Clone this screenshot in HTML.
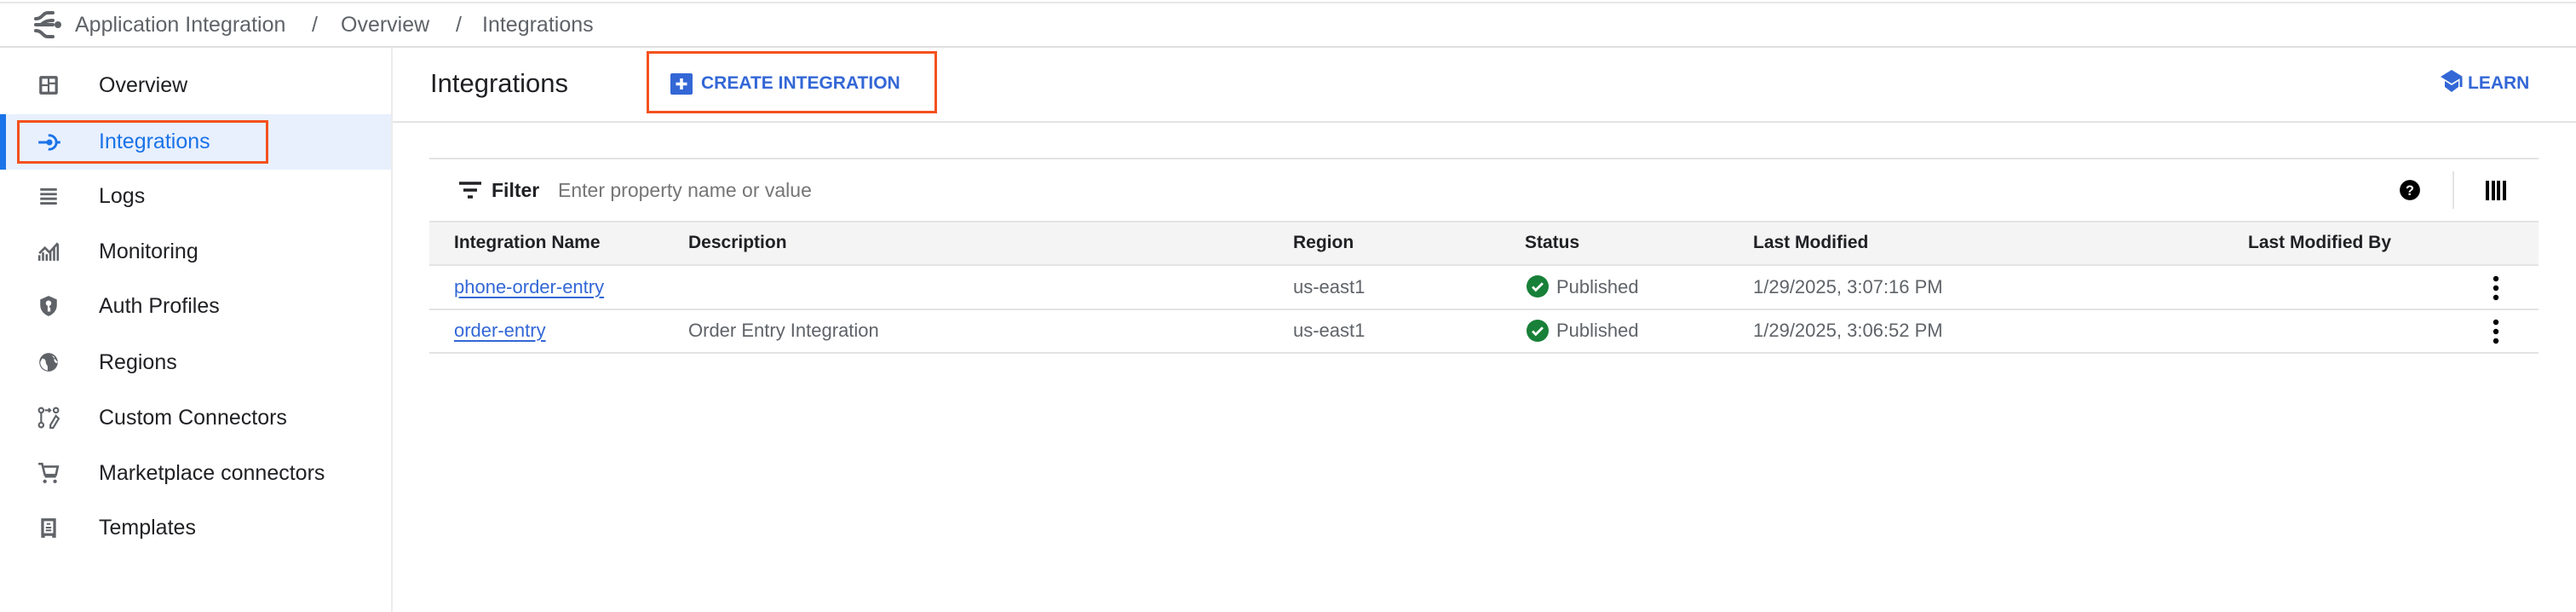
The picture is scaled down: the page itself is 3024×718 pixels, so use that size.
<!DOCTYPE html>
<html><head><meta charset="utf-8"><style>
*{margin:0;padding:0;box-sizing:border-box}
body{width:3024px;height:718px;background:#fff;font-family:"Liberation Sans",Arial,sans-serif;position:relative;overflow:hidden;color:#202124}
.a{position:absolute}
.line{position:absolute;background:#dadce0}
.nav{position:absolute;left:116px;font-size:25px;color:#202124;line-height:30px}
.ic{position:absolute;left:44px}
.th{position:absolute;font-size:21px;font-weight:bold;color:#202124;line-height:26px}
.td{position:absolute;font-size:22px;color:#5f6368;line-height:26px}
.lk{position:absolute;font-size:22px;color:#3367d6;line-height:26px;text-decoration:underline;text-underline-offset:4px}
.bc{position:absolute;top:14px;font-size:25px;color:#5f6368;line-height:30px}
</style></head><body>
<div class="line" style="left:0;top:2px;width:3024px;height:2px;background:#e8e8e8"></div>
<svg class="a" style="left:38px;top:10px" width="38" height="38" viewBox="0 0 38 38"><g fill="none" stroke="#5f6368" stroke-width="4" stroke-linecap="round"><path d="M4 19h20"/><path d="M4 12c8 0 8-7 14-7h6"/><path d="M4 26c8 0 8 7 14 7h6"/><path d="M10 19c4-3 6-5 14-5"/></g><circle cx="30" cy="19" r="4" fill="#5f6368"/></svg>
<div class="bc" style="left:88px">Application Integration</div>
<div class="bc" style="left:366px">/</div>
<div class="bc" style="left:400px">Overview</div>
<div class="bc" style="left:535px">/</div>
<div class="bc" style="left:566px">Integrations</div>
<div class="line" style="left:0;top:54px;width:3024px;height:2px;background:#e0e0e0"></div>
<div class="line" style="left:459px;top:56px;width:2px;height:662px;background:#ececec"></div>
<!-- sidebar -->
<div class="a" style="left:0;top:134px;width:459px;height:65px;background:#e8f0fe"></div>
<div class="a" style="left:0;top:134px;width:7px;height:65px;background:#1a73e8"></div>
<div class="a" style="left:20px;top:141px;width:295px;height:51px;border:3px solid #f4511e"></div>
<svg class="ic" style="top:87px" width="26" height="26" viewBox="0 0 24 24"><rect x="2" y="2" width="20" height="20" rx="2" fill="#5f6368"/><rect x="5" y="5" width="6" height="6" fill="#fff"/><rect x="13" y="5" width="6" height="4" fill="#fff"/><rect x="5" y="13" width="6" height="6" fill="#fff"/><rect x="13" y="11" width="6" height="8" fill="#fff"/></svg>
<div class="nav" style="top:85px">Overview</div>
<svg class="ic" style="top:153px" width="28" height="28" viewBox="0 0 24 24"><path d="M12 5a7 7 0 1 1 0 14" fill="none" stroke="#1a73e8" stroke-width="2.5"/><path d="M12 5a7 7 0 0 0-1 .1M12 19a7 7 0 0 1-1-.1" fill="none" stroke="#1a73e8" stroke-width="2.5"/><circle cx="12" cy="12" r="3" fill="#1a73e8"/><path d="M1 12h9M19 12h4" stroke="#1a73e8" stroke-width="2.5"/></svg>
<div class="nav" style="top:151px;color:#1a73e8">Integrations</div>
<svg class="ic" style="top:218px" width="26" height="26" viewBox="0 0 24 24"><path d="M3 4h18M3 9h18M3 14h18M3 19h18" stroke="#5f6368" stroke-width="2.6"/></svg>
<div class="nav" style="top:215px">Logs</div>
<svg class="ic" style="top:282px" width="26" height="26" viewBox="0 0 24 24"><path d="M2 22V16M6 22V13M10 22V15M14 22V12M18 22V8M22 22V4" stroke="#5f6368" stroke-width="2.4"/><path d="M2 14l6-6 5 5 9-10" fill="none" stroke="#5f6368" stroke-width="2.4"/></svg>
<div class="nav" style="top:280px">Monitoring</div>
<svg class="ic" style="top:346px" width="26" height="26" viewBox="0 0 24 24"><path d="M12 1L3 5v6c0 6 4 10 9 12 5-2 9-6 9-12V5z" fill="#5f6368"/><circle cx="12" cy="9" r="3" fill="#fff"/><path d="M12 11v7M12 15h2M12 17h2" stroke="#fff" stroke-width="2"/></svg>
<div class="nav" style="top:344px">Auth Profiles</div>
<svg class="ic" style="top:412px" width="26" height="26" viewBox="0 0 24 24"><circle cx="12" cy="12" r="10" fill="#5f6368"/><path d="M5 8c3 0 4 2 4 4s2 3 2 5v4c-5-1-8-5-8-9zM14 3c1 2 3 2 4 3s-1 4 1 6c1 1 2 1 3 0" fill="#fff"/></svg>
<div class="nav" style="top:410px">Regions</div>
<svg class="ic" style="top:477px" width="26" height="26" viewBox="0 0 24 24"><g fill="none" stroke="#5f6368" stroke-width="2"><circle cx="4" cy="4" r="2.5"/><circle cx="4" cy="20" r="2.5"/><path d="M4 7v10"/><path d="M8 4h6M12 2l2 2-2 2"/><circle cx="20" cy="4" r="2.5"/><path d="M20 10l-6 10v3h3l6-10z"/></g></svg>
<div class="nav" style="top:475px">Custom Connectors</div>
<svg class="ic" style="top:542px" width="26" height="26" viewBox="0 0 24 24"><path d="M1 2h4l3 12h12l2-9H7" fill="none" stroke="#5f6368" stroke-width="2.4"/><path d="M8 16h12" stroke="#5f6368" stroke-width="2"/><circle cx="8" cy="21" r="2" fill="#5f6368"/><circle cx="19" cy="21" r="2" fill="#5f6368"/></svg>
<div class="nav" style="top:540px">Marketplace connectors</div>
<svg class="ic" style="top:606px" width="26" height="26" viewBox="0 0 24 24"><path d="M4 2h16v21h-4v-2H8v2H4z" fill="#5f6368"/><rect x="7" y="5" width="10" height="13" fill="#fff"/><path d="M10 8h4M9 12h6M9 15h6" stroke="#5f6368" stroke-width="1.8"/></svg>
<div class="nav" style="top:604px">Templates</div>
<!-- header -->
<div class="a" style="left:505px;top:80px;font-size:31px;color:#202124;line-height:36px">Integrations</div>
<div class="a" style="left:759px;top:60px;width:341px;height:73px;border:3px solid #f4511e"></div>
<svg class="a" style="left:787px;top:86px" width="26" height="25" viewBox="0 0 26 25"><rect width="26" height="25" rx="2" fill="#3367d6"/><path d="M13 6v13M6.5 12.5h13" stroke="#fff" stroke-width="3.5"/></svg>
<div class="a" style="left:823px;top:85px;font-size:21px;font-weight:bold;color:#3367d6;line-height:26px">CREATE INTEGRATION</div>
<svg class="a" style="left:2864px;top:82px" width="28" height="30" viewBox="0 0 28 30"><path d="M14 0L27 8 14 16 1 8z" fill="#3367d6"/><path d="M6 13v7l8 6 8-6v-7l-8 5z" fill="#3367d6"/><path d="M25 9v11" stroke="#3367d6" stroke-width="3"/></svg>
<div class="a" style="left:2897px;top:85px;font-size:21px;font-weight:bold;color:#3367d6;line-height:26px">LEARN</div>
<div class="line" style="left:461px;top:142px;width:2563px;height:2px;background:#e3e3e3"></div>
<!-- filter -->
<div class="line" style="left:504px;top:185px;width:2476px;height:2px;background:#e3e3e3"></div>
<svg class="a" style="left:539px;top:213px" width="26" height="20" viewBox="0 0 26 20"><path d="M0 2h26M5 10h16M10 18h6" stroke="#202124" stroke-width="3.5"/></svg>
<div class="a" style="left:577px;top:209px;font-size:23px;font-weight:bold;color:#202124;line-height:28px">Filter</div>
<div class="a" style="left:655px;top:209px;font-size:23px;color:#757575;line-height:28px">Enter property name or value</div>
<svg class="a" style="left:2816px;top:210px" width="26" height="26" viewBox="0 0 24 24"><circle cx="12" cy="12" r="11" fill="#000"/><text x="12" y="17.5" font-family="Liberation Sans" font-weight="bold" font-size="15" fill="#fff" text-anchor="middle">?</text></svg>
<div class="line" style="left:2879px;top:201px;width:2px;height:44px;background:#e3e3e3"></div>
<svg class="a" style="left:2918px;top:212px" width="24" height="23" viewBox="0 0 24 23"><path d="M2 0v23M9 0v23M15 0v23M22 0v23" stroke="#000" stroke-width="4"/></svg>
<!-- table -->
<div class="a" style="left:504px;top:259px;width:2476px;height:52px;background:#f4f4f4;border-top:2px solid #e3e3e3"></div>
<div class="line" style="left:504px;top:310px;width:2476px;height:2px;background:#e3e3e3"></div>
<div class="line" style="left:504px;top:362px;width:2476px;height:2px;background:#e3e3e3"></div>
<div class="line" style="left:504px;top:413px;width:2476px;height:2px;background:#e3e3e3"></div>
<div class="th" style="left:533px;top:272px">Integration Name</div>
<div class="th" style="left:808px;top:272px">Description</div>
<div class="th" style="left:1518px;top:272px">Region</div>
<div class="th" style="left:1790px;top:272px">Status</div>
<div class="th" style="left:2058px;top:272px">Last Modified</div>
<div class="th" style="left:2639px;top:272px">Last Modified By</div>

<div class="lk" style="left:533px;top:324px">phone-order-entry</div>
<div class="td" style="left:1518px;top:324px">us-east1</div>
<svg class="a" style="left:1792px;top:323px" width="26" height="26" viewBox="0 0 24 24"><circle cx="12" cy="12" r="12" fill="#188038"/><path d="M6.5 12.5l3.5 3.5 7.5-7.5" fill="none" stroke="#fff" stroke-width="2.6"/></svg>
<div class="td" style="left:1827px;top:324px">Published</div>
<div class="td" style="left:2058px;top:324px">1/29/2025, 3:07:16 PM</div>
<svg class="a" style="left:2924px;top:323px" width="12" height="30" viewBox="0 0 12 30"><circle cx="6" cy="4" r="3.2"/><circle cx="6" cy="15" r="3.2"/><circle cx="6" cy="26" r="3.2"/></svg>

<div class="lk" style="left:533px;top:375px">order-entry</div>
<div class="td" style="left:808px;top:375px">Order Entry Integration</div>
<div class="td" style="left:1518px;top:375px">us-east1</div>
<svg class="a" style="left:1792px;top:375px" width="26" height="26" viewBox="0 0 24 24"><circle cx="12" cy="12" r="12" fill="#188038"/><path d="M6.5 12.5l3.5 3.5 7.5-7.5" fill="none" stroke="#fff" stroke-width="2.6"/></svg>
<div class="td" style="left:1827px;top:375px">Published</div>
<div class="td" style="left:2058px;top:375px">1/29/2025, 3:06:52 PM</div>
<svg class="a" style="left:2924px;top:374px" width="12" height="30" viewBox="0 0 12 30"><circle cx="6" cy="4" r="3.2"/><circle cx="6" cy="15" r="3.2"/><circle cx="6" cy="26" r="3.2"/></svg>
</body></html>
